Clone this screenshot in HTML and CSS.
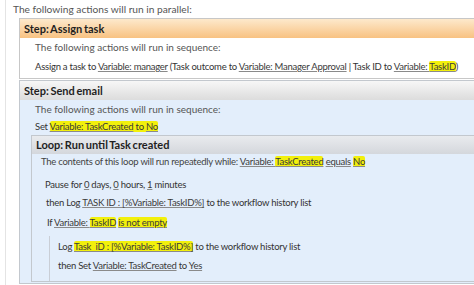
FILE: index.html
```html
<!DOCTYPE html>
<html lang="en">
  <head>
    <meta charset="UTF-8" />
    <title>Workflow steps</title>
    <link rel="stylesheet" href="styles.css">
  </head>
  <body>
    <div class="parallel">
      <p class="caption top">The following actions will run in parallel:</p>

      <section class="step step-task">
        <h2 class="step-head">Step: Assign task</h2>
        <div class="step-body">
          <p class="caption">The following actions will run in sequence:</p>
          <p class="line">Assign a task to <a>Variable: manager</a> (Task outcome to <a>Variable: Manager Approval</a> | Task ID to <a>Variable: <mark>TaskID</mark></a>)</p>
        </div>
      </section>

      <section class="step step-mail">
        <h2 class="step-head">Step: Send email</h2>
        <div class="step-body">
          <p class="caption">The following actions will run in sequence:</p>
          <p class="line">Set <mark><a>Variable: TaskCreated</a> to <a>No</a></mark></p>

          <section class="loop">
            <h2 class="step-head">Loop: Run until Task created</h2>
            <div class="loop-body">
              <p class="line caption">The contents of this loop will run repeatedly while: <a>Variable: <mark>TaskCreated</mark></a> <a>equals</a> <mark><a>No</a></mark></p>
              <p class="line pause">Pause for <a>0</a> days, <a>0</a> hours, <a>1</a> minutes</p>
              <p class="line">then Log <a>TASK ID : [%Variable: TaskID%]</a> to the workflow history list</p>
              <p class="line cond">If <a>Variable: <mark>TaskID</mark></a> <mark><a>is not empty</a></mark></p>
              <div class="branch">
                <p class="line">Log <mark><a>Task&nbsp; iD : [%Variable: TaskID%]</a></mark> to the workflow history list</p>
                <p class="line">then Set <a>Variable: TaskCreated</a> to <a>Yes</a></p>
              </div>
            </div>
          </section>
        </div>
      </section>
    </div>
  </body>
</html>
```

FILE: styles.css
```css
* {
  margin: 0;
  padding: 0;
  box-sizing: border-box;
}

body {
  background: #ffffff;
  font-family: Lato, "Open Sans", sans-serif;
  font-size: 10px;
  color: #333333;
  overflow: hidden;
  width: 474px;
  height: 285px;
  white-space: nowrap;
}

a {
  color: #3a3a3a;
  text-decoration: underline;
  text-decoration-color: #8a8a8a;
}

mark {
  background: #f2f00c;
  color: inherit;
  border-radius: 2px;
}

.parallel {
  margin-left: 5px;
  border-left: 1px solid #e4e4e4;
  padding: 3px 0 0 13px;
  height: 285px;
}

.caption {
  color: #555555;
}

.caption.top {
  margin-left: -6px;
  font-size: 10.2px;
  line-height: 13px;
}

.line {
  font-size: 9.5px;
  letter-spacing: -0.25px;
}

.step {
  border: 1px solid #c7c7c7;
  border-right: none;
  margin-top: 2px;
  width: 470px;
}

.step-head {
  font-size: 11px;
  font-weight: 700;
  color: #1f1f1f;
  height: 19px;
  line-height: 19px;
  padding-left: 4px;
  word-spacing: -1px;
}

.step-task .step-head {
  background: linear-gradient(#fde9cc, #f8c282);
}

.step-task .step-body {
  background: #ffffff;
  padding: 1px 0 0 15px;
  height: 40px;
}

.step-task .caption {
  line-height: 17px;
}

.step-task .line {
  line-height: 22px;
}

.step-mail {
  margin-top: 1px;
  border-color: #c3c8ce;
}

.step-mail > .step-head {
  background: linear-gradient(#f7f7f7, #dcdcdc);
}

.step-mail > .step-body {
  background: #e3eefb;
  padding: 1px 0 1px 15px;
}

.step-mail > .step-body > .caption {
  line-height: 17px;
}

.step-mail > .step-body > .line {
  line-height: 17px;
}

.loop {
  margin: 0 0 0 -4px;
  border: 1px solid #c3c8ce;
  border-right: none;
  height: 147px;
}

.loop .step-head {
  background: linear-gradient(#e9ebee, #d4d7dc);
  height: 18px;
  line-height: 18px;
}

.loop-body {
  background: #e3eefb;
  padding: 0 0 0 9px;
  height: 127px;
}

.loop-body > .line {
  line-height: 18px;
}

.loop-body > .caption {
  line-height: 16px;
  color: #444444;
}

.loop-body .pause {
  margin-top: 6px;
  padding-left: 4px;
}

.loop-body .pause + .line {
  padding-left: 5px;
}

.loop-body .cond {
  margin-top: 2px;
  padding-left: 6px;
}

.branch {
  margin: 4px 0 0 8px;
  border-left: 1px solid #c9ced6;
  padding: 1px 0 0 8px;
  height: 45px;
}

.branch .line {
  line-height: 19px;
}
```
